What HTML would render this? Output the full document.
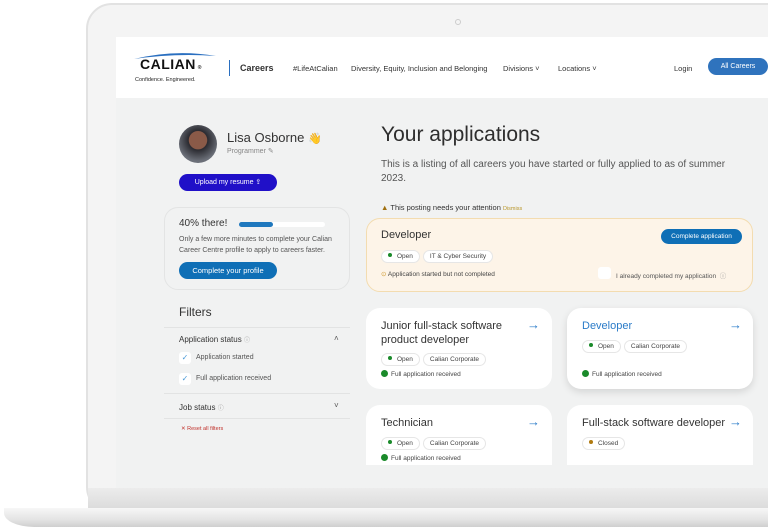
<!DOCTYPE html>
<html><head><meta charset="utf-8"><style>
*{margin:0;padding:0;box-sizing:border-box}
body{width:768px;height:531px;overflow:hidden;background:#fff;font-family:"Liberation Sans",sans-serif;color:#333;position:relative}
.a{position:absolute}
.lid{left:86px;top:3px;width:720px;height:510px;border-radius:26px;background:#f4f4f4;border:2px solid #e2e2e2}
.screen{left:116px;top:37px;width:652px;height:451px;background:#f1f2f2;overflow:hidden}
.hdr{left:0;top:0;width:652px;height:61px;background:#fff}
.bez{left:88px;top:488px;width:680px;height:20px;background:linear-gradient(#ececec,#dcdcdc)}
.base{left:4px;top:508px;width:764px;height:19px;border-radius:0 0 0 30px/0 0 0 14px;background:linear-gradient(#f7f7f7,#e4e4e4 60%,#cfcfcf)}
.nav{font-size:7.5px;color:#333;top:27px}
.card{background:#fff;border-radius:14px}
.pill{display:inline-block;border:1px solid #e6e6e6;border-radius:8px;font-size:6.5px;padding:2px 6px;margin-right:3px;color:#444;background:#fff}
.dot{display:inline-block;width:4px;height:4px;border-radius:50%;background:#1a8a2a;margin-right:5px;vertical-align:1px}
.ok{font-size:6.5px;color:#444}
.ok i{display:inline-block;width:7px;height:7px;border-radius:50%;background:#1a8a2a;margin-right:3px;vertical-align:-1px}
.arr{color:#2a7bc8;font-size:13px}
.t{font-size:11px;color:#333;line-height:14px}
</style></head><body>
<div class="a lid"></div>
<div class="a" style="left:455px;top:19px;width:6px;height:6px;border-radius:50%;border:1px solid #ccc"></div>
<div class="a screen">
 <div class="a hdr">
  <svg class="a" style="left:16px;top:14px" width="86" height="10"><path d="M2 8 Q43 -2 84 5 Q43 2 2 8Z" fill="#2a6fc0"/></svg>
  <div class="a" style="left:24px;top:19px;font-weight:bold;font-size:14px;color:#111;letter-spacing:0.5px">CALIAN<span style="font-size:5px">&nbsp;®</span></div>
  <div class="a" style="left:19px;top:40px;font-size:5.5px;color:#222">Confidence. Engineered.</div>
  <div class="a" style="left:113px;top:23px;width:1px;height:16px;background:#2a6fc0"></div>
  <div class="a nav" style="left:124px;top:26px;font-size:9px;font-weight:bold">Careers</div>
  <div class="a nav" style="left:177px">#LifeAtCalian</div>
  <div class="a nav" style="left:235px">Diversity, Equity, Inclusion and Belonging</div>
  <div class="a nav" style="left:387px">Divisions ˅</div>
  <div class="a nav" style="left:442px">Locations ˅</div>
  <div class="a nav" style="left:558px">Login</div>
  <div class="a" style="left:592px;top:21px;width:60px;height:17px;border-radius:9px;background:#2f73bd;color:#fff;font-size:7px;text-align:center;line-height:17px">All Careers</div>
 </div>
 <div class="a" style="left:63px;top:88px;width:38px;height:38px;border-radius:50%;background:radial-gradient(circle at 50% 40%,#8a5a48 0 30%,#2a2a30 32%,#6b6f78 70%)"></div>
 <div class="a" style="left:111px;top:93px;font-size:13px;color:#333">Lisa Osborne <span style="font-size:11px">👋</span></div>
 <div class="a" style="left:111px;top:110px;font-size:7px;color:#888">Programmer ✎</div>
 <div class="a" style="left:63px;top:137px;width:98px;height:17px;border-radius:9px;background:#2010c8;color:#fff;font-size:7px;line-height:17px;text-align:center">Upload my resume ⇪</div>
 <div class="a" style="left:48px;top:170px;width:186px;height:83px;border-radius:14px;border:1px solid #e3e4e4;background:#f1f2f2"></div>
 <div class="a" style="left:63px;top:181px;font-size:10px;color:#333">40% there!</div>
 <div class="a" style="left:123px;top:185px;width:86px;height:5px;border-radius:3px;background:#fff"><div style="width:34px;height:5px;border-radius:3px;background:#1f78be"></div></div>
 <div class="a" style="left:63px;top:197px;width:165px;font-size:7px;color:#555;line-height:11px">Only a few more minutes to complete your Calian Career Centre profile to apply to careers faster.</div>
 <div class="a" style="left:63px;top:225px;width:98px;height:17px;border-radius:9px;background:#0f6fb6;color:#fff;font-size:7.5px;line-height:17px;text-align:center">Complete your profile</div>
 <div class="a" style="left:63px;top:268px;font-size:12px;color:#333">Filters</div>
 <div class="a" style="left:48px;top:290px;width:186px;height:1px;background:#e2e3e3"></div>
 <div class="a" style="left:63px;top:298px;font-size:8px;color:#333">Application status <span style="font-size:6px;color:#999">ⓘ</span></div>
 <div class="a" style="left:218px;top:297px;font-size:8px;color:#555">˄</div>
 <div class="a" style="left:63px;top:315px;width:12px;height:12px;background:#fff;border-radius:3px;color:#4a9ad8;font-size:8px;text-align:center;line-height:12px">✓</div>
 <div class="a" style="left:80px;top:317px;font-size:7px;color:#555">Application started</div>
 <div class="a" style="left:63px;top:336px;width:12px;height:12px;background:#fff;border-radius:3px;color:#4a9ad8;font-size:8px;text-align:center;line-height:12px">✓</div>
 <div class="a" style="left:80px;top:338px;font-size:7px;color:#555">Full application received</div>
 <div class="a" style="left:48px;top:356px;width:186px;height:1px;background:#e2e3e3"></div>
 <div class="a" style="left:63px;top:366px;font-size:8px;color:#333">Job status <span style="font-size:6px;color:#999">ⓘ</span></div>
 <div class="a" style="left:218px;top:364px;font-size:8px;color:#555">˅</div>
 <div class="a" style="left:48px;top:381px;width:186px;height:1px;background:#e2e3e3"></div>
 <div class="a" style="left:65px;top:389px;font-size:5.5px;color:#c0302a">✕ Reset all filters</div>
 <div class="a" style="left:265px;top:86px;font-size:21px;color:#2e2e2e">Your applications</div>
 <div class="a" style="left:265px;top:121px;width:360px;font-size:10px;color:#555;line-height:14px">This is a listing of all careers you have started or fully applied to as of summer 2023.</div>
 <div class="a" style="left:265px;top:166px;font-size:7.5px;color:#333"><span style="color:#a07010">▲</span> This posting needs your attention <span style="color:#b8962a;font-size:5.5px">Dismiss</span></div>
 <div class="a" style="left:250px;top:181px;width:387px;height:74px;border-radius:14px;background:#fdf4e8;border:1px solid #f3dcb0"></div>
 <div class="a t" style="left:265px;top:191px">Developer</div>
 <div class="a" style="left:265px;top:208px"><span class="pill"><span class="dot"></span>Open</span><span class="pill">IT &amp; Cyber Security</span></div>
 <div class="a" style="left:545px;top:192px;width:81px;height:15px;border-radius:8px;background:#0f6fb6;color:#fff;font-size:6.5px;line-height:15px;text-align:center">Complete application</div>
 <div class="a ok" style="left:265px;top:233px"><span style="color:#d09a30">⊙</span> Application started but not completed</div>
 <div class="a" style="left:482px;top:230px;width:13px;height:12px;background:#fff;border-radius:3px"></div>
 <div class="a ok" style="left:500px;top:233px;color:#555">I already completed my application &nbsp;<span style="color:#999">ⓘ</span></div>
 <div class="a card" style="left:250px;top:271px;width:186px;height:81px"></div>
 <div class="a t" style="left:265px;top:282px">Junior full-stack software<br>product developer</div>
 <div class="a arr" style="left:411px;top:280px">→</div>
 <div class="a" style="left:265px;top:311px"><span class="pill"><span class="dot"></span>Open</span><span class="pill">Calian Corporate</span></div>
 <div class="a ok" style="left:265px;top:333px"><i></i>Full application received</div>
 <div class="a card" style="left:451px;top:271px;width:186px;height:81px;box-shadow:0 3px 8px rgba(0,0,0,.12)"></div>
 <div class="a t" style="left:466px;top:282px;color:#2a7bc8">Developer</div>
 <div class="a arr" style="left:613px;top:280px">→</div>
 <div class="a" style="left:466px;top:298px"><span class="pill"><span class="dot"></span>Open</span><span class="pill">Calian Corporate</span></div>
 <div class="a ok" style="left:466px;top:333px"><i></i>Full application received</div>
 <div class="a card" style="left:250px;top:368px;width:186px;height:60px;border-radius:14px 14px 0 0"></div>
 <div class="a t" style="left:265px;top:379px">Technician</div>
 <div class="a arr" style="left:411px;top:377px">→</div>
 <div class="a" style="left:265px;top:395px"><span class="pill"><span class="dot"></span>Open</span><span class="pill">Calian Corporate</span></div>
 <div class="a ok" style="left:265px;top:417px"><i></i>Full application received</div>
 <div class="a card" style="left:451px;top:368px;width:186px;height:60px;border-radius:14px 14px 0 0"></div>
 <div class="a t" style="left:466px;top:379px">Full-stack software developer</div>
 <div class="a arr" style="left:613px;top:377px">→</div>
 <div class="a" style="left:466px;top:395px"><span class="pill"><span class="dot" style="background:#b07a10"></span>Closed</span></div>
</div>
<div class="a bez"></div>
<div class="a base"></div>
</body></html>
